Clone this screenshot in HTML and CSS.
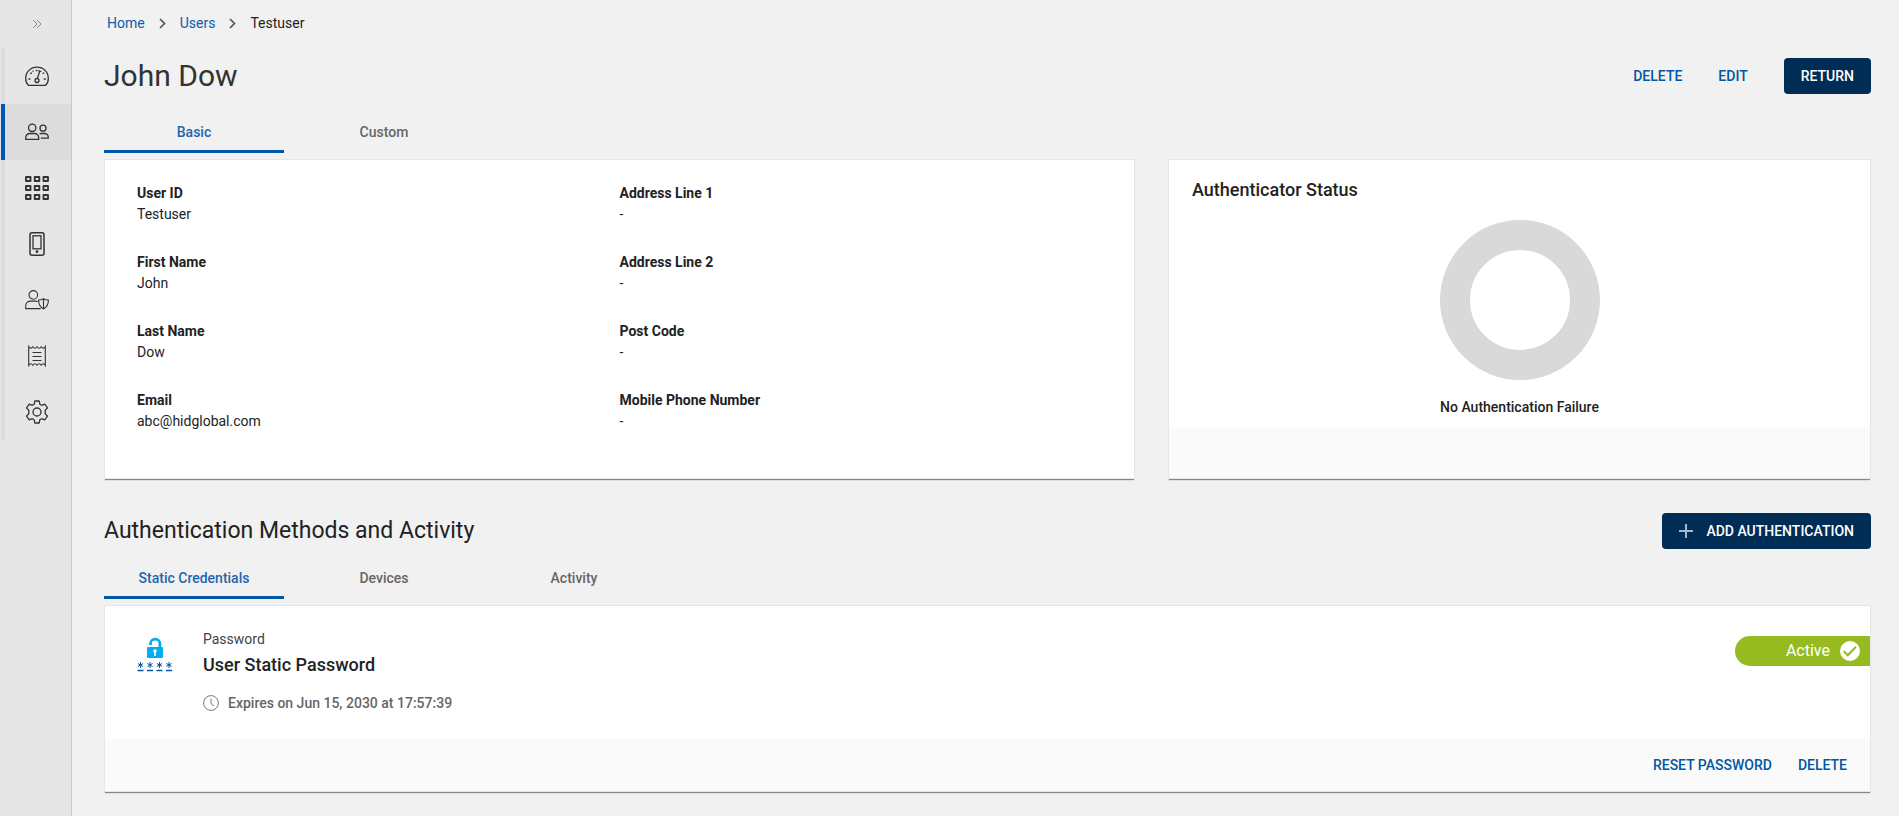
FILE: index.html
```html
<!DOCTYPE html>
<html lang="en">
<head>
    <meta charset="UTF-8">
    <meta name="viewport" content="width=device-width, initial-scale=1.0">
    <title>John Dow - Users</title>
    <link rel="stylesheet" href="styles.css">
</head>
<body>
    <div class="layout">
        <!-- Sidebar -->
        <nav class="sidebar" aria-label="Main menu">
            <button class="expand" aria-label="Expand menu">
                <svg width="10" height="10" viewBox="0 0 10 10"><path d="M1 1l4 4-4 4M5 1l4 4-4 4"/></svg>
            </button>
            <a class="nav-item" href="#" aria-label="Dashboard">
                <svg class="nav-icon" viewBox="0 0 24 24">
                    <path d="M3.4 21.3C1.700 19.800.7 17.500.7 14.500 .7 8 5.500 3.200 12 3.200S23.300 8 23.300 14.500c0 3-1 5.300-2.700 6.800z"/>
                    <circle cx="12" cy="16.500" r="2"/>
                    <path d="M12.400 14.400L14.800 7M13.300 6.600l3 .9"/>
                    <path class="dots" d="M3.400 15h2M18.800 15h2M5.300 9.200h1.600M10.800 6.500h1.600M17.600 9.200h1.600M7.500 7.300h1"/>
                </svg>
            </a>
            <a class="nav-item active" href="#" aria-label="Users">
                <svg class="nav-icon" viewBox="0 0 24 24">
                    <circle cx="7.200" cy="7.800" r="3.700"/>
                    <path d="M.7 19.300v-1.600c0-2.400 1.800-4.200 4.200-4.200h4.600c2.400 0 4.200 1.800 4.200 4.200v1.600z"/>
                    <circle cx="18" cy="8.200" r="3"/>
                    <path d="M14.600 13.800c.5-.2 1-.3 1.600-.3h3.300c2.100 0 3.800 1.600 3.800 3.700v1h-7.500"/>
                </svg>
            </a>
            <a class="nav-item" href="#" aria-label="Applications">
                <svg class="nav-icon grid-icon" viewBox="0 0 24 24">
                    <path d="M1 1h4.500v4H1zM9.700 1h4.600v4H9.700zM18.500 1H23v4h-4.500zM1 10h4.500v4H1zM9.700 10h4.600v4H9.700zM18.500 10H23v4h-4.500zM1 19h4.500v4H1zM9.700 19h4.600v4H9.700zM18.500 19H23v4h-4.500z"/>
                </svg>
            </a>
            <a class="nav-item" href="#" aria-label="Devices">
                <svg class="nav-icon" viewBox="0 0 24 24">
                    <rect class="thick" x="5" y=".8" width="14" height="22.400" rx="2"/>
                    <rect x="8" y="3.800" width="8" height="13"/>
                    <circle class="fill" cx="12" cy="19.600" r=".8"/>
                </svg>
            </a>
            <a class="nav-item" href="#" aria-label="Administrators">
                <svg class="nav-icon thin" viewBox="0 0 24 24">
                    <circle cx="8.300" cy="6.900" r="4.300"/>
                    <path d="M12.600 13.600c-.8-.4-1.400-.5-2.300-.5H5.700c-2.900 0-5 2-5 4.600v2.900h15"/>
                    <path d="M18.500 10.700c-1.500 1-3.100 1.300-4.900 1.300 0 4.300 1.600 7.200 4.900 8.900 3.300-1.700 4.900-4.600 4.900-8.900-1.800 0-3.400-.3-4.900-1.300zM18.500 10.700v10.200"/>
                </svg>
            </a>
            <a class="nav-item" href="#" aria-label="Reports">
                <svg class="nav-icon thin" viewBox="0 0 24 24">
                    <path d="M3.700 2.500q2 3.200 4.100.3 2.100 3 4.200 0 2.100 3 4.200 0 2.100 2.900 4.100-.3v19q-2-3.200-4.100-.3-2.100-3-4.200 0-2.100-3-4.200 0-2.100-2.900-4.100.3z"/>
                    <path d="M7.500 8.500h9M7.500 12.500h9M7.500 16.500h9"/>
                </svg>
            </a>
            <a class="nav-item" href="#" aria-label="Settings">
                <svg class="nav-icon" viewBox="0 0 24 24">
                    <circle cx="12" cy="12" r="4"/>
                    <path stroke-linejoin="round" d="M9.800 1h4.400l.6 3.200 1.900 1.100 3-1.100 2.800 3.700-2.300 2.400v3.400l2.300 2.400-2.800 3.700-3-1.100-1.900 1.100-.6 3.200H9.800l-.6-3.200-1.900-1.100-3 1.100-2.800-3.700 2.300-2.400v-3.400L1.500 7.900l2.800-3.700 3 1.100 1.900-1.100z"/>
                </svg>
            </a>
        </nav>

        <main class="content">
            <nav class="breadcrumb" aria-label="Breadcrumb">
                <a href="#">Home</a>
                <svg width="7" height="12" viewBox="0 0 7 12"><path d="M1 2l4.500 4.500L1 11"/></svg>
                <a href="#">Users</a>
                <svg width="7" height="12" viewBox="0 0 7 12"><path d="M1 2l4.500 4.500L1 11"/></svg>
                <span>Testuser</span>
            </nav>

            <header class="page-header">
                <h1>John Dow</h1>
                <div class="actions">
                    <button class="btn-text">Delete</button>
                    <button class="btn-text">Edit</button>
                    <button class="btn-primary">Return</button>
                </div>
            </header>

            <div class="tabs" role="tablist">
                <button class="tab selected" role="tab" aria-selected="true">Basic</button>
                <button class="tab" role="tab" aria-selected="false">Custom</button>
            </div>

            <div class="cards">
                <section class="card details">
                    <dl class="fields">
                        <div><dt>User ID</dt><dd>Testuser</dd></div>
                        <div><dt>First Name</dt><dd>John</dd></div>
                        <div><dt>Last Name</dt><dd>Dow</dd></div>
                        <div><dt>Email</dt><dd>abc@hidglobal.com</dd></div>
                    </dl>
                    <dl class="fields">
                        <div><dt>Address Line 1</dt><dd>-</dd></div>
                        <div><dt>Address Line 2</dt><dd>-</dd></div>
                        <div><dt>Post Code</dt><dd>-</dd></div>
                        <div><dt>Mobile Phone Number</dt><dd>-</dd></div>
                    </dl>
                </section>

                <section class="card status">
                    <div class="status-body">
                        <h3>Authenticator Status</h3>
                        <div class="donut"></div>
                        <p>No Authentication Failure</p>
                    </div>
                    <div class="card-footer"></div>
                </section>
            </div>

            <!-- Authentication methods -->
            <header class="section-header">
                <h2>Authentication Methods and Activity</h2>
                <button class="btn-primary">
                    <svg width="14" height="14" viewBox="0 0 14 14"><path d="M7 0v14M0 7h14"/></svg>
                    Add Authentication
                </button>
            </header>

            <div class="tabs" role="tablist">
                <button class="tab selected" role="tab" aria-selected="true">Static Credentials</button>
                <button class="tab" role="tab" aria-selected="false">Devices</button>
                <button class="tab" role="tab" aria-selected="false">Activity</button>
            </div>

            <section class="card">
                <div class="credential">
                    <svg class="lock" width="36" height="36" viewBox="0 0 36 36">
                        <path d="M13.500 8V6.800a4.700 4.700 0 0 1 9.400 0V11" fill="none" stroke="#00aeef" stroke-width="2.800"/>
                        <rect x="10" y="10" width="16" height="11" rx="1" fill="#00aeef"/>
                        <circle cx="18" cy="14" r="1.800" fill="#fff"/>
                        <path d="M18 14v5" stroke="#fff" stroke-width="1.600"/>
                        <g fill="none" stroke="#0057a4" stroke-width="1">
                            <path d="M3.500 25v6M.9 26.500l5.200 3M6.100 26.500l-5.200 3"/>
                            <path d="M13 25v6M10.400 26.500l5.200 3M15.600 26.500l-5.200 3"/>
                            <path d="M22.500 25v6M19.900 26.500l5.200 3M25.100 26.500l-5.200 3"/>
                            <path d="M32 25v6M29.400 26.500l5.200 3M34.600 26.500l-5.200 3"/>
                            <path d="M.5 33.500h6M10 33.500h6M19.500 33.500h6M29 33.500h6" stroke-width="1.500"/>
                        </g>
                    </svg>
                    <div class="credential-info">
                        <p class="type">Password</p>
                        <h3>User Static Password</h3>
                        <p class="expires">
                            <svg width="16" height="16" viewBox="0 0 16 16"><circle cx="8" cy="8" r="7.400"/><path d="M8 3.500V8.500l3 2.500"/></svg>
                            Expires on Jun 15, 2030 at 17:57:39
                        </p>
                    </div>
                    <div class="badge">
                        Active
                        <svg width="20" height="20" viewBox="0 0 20 20"><circle cx="10" cy="10" r="10" fill="#fff"/><path d="M3.800 10.300l4 4L16 5.800" fill="none" stroke="#95bb20" stroke-width="2"/></svg>
                    </div>
                </div>
                <div class="card-footer">
                    <button class="btn-text">Reset Password</button>
                    <button class="btn-text">Delete</button>
                </div>
            </section>
        </main>
    </div>
</body>
</html>
```
FILE: styles.css
```css
* {
    box-sizing: border-box;
}
body {
    margin: 0;
    background-color: #f1f1f1;
    color: #222;
    font-family: Roboto, Arial, sans-serif;
    font-size: 14px;
    line-height: 20px;
}
h1, h2, h3, p, dl, dd {
    margin: 0;
}
a {
    color: #0b5cad;
    text-decoration: none;
}
button {
    padding: 0;
    border: none;
    background: none;
    font-family: inherit;
    font-size: 14px;
    font-weight: 500;
    cursor: pointer;
}
.layout {
    display: flex;
    min-height: 100vh;
}

/* Sidebar */
.sidebar {
    flex: none;
    width: 72px;
    padding-left: 1px;
    background-color: #e6e6e6;
    border-right: 1px solid #c8c8c8;
}
.expand {
    display: flex;
    align-items: center;
    width: 100%;
    height: 48px;
    padding-left: 31px;
}
.expand svg {
    fill: none;
    stroke: #8c8c8c;
}
.nav-item {
    display: flex;
    align-items: center;
    height: 56px;
    padding-left: 20px;
    border-left: 4px solid #dcdcdc;
}
.nav-item.active {
    background-color: #dcdcdc;
    border-left-color: #0057b8;
}
.nav-icon {
    width: 24px;
    height: 24px;
    fill: none;
    stroke: #333;
    stroke-width: 1.3;
}
.nav-icon.thin {
    stroke-width: 1.1;
}
.nav-icon.grid-icon {
    stroke-width: 1.9;
    stroke-linejoin: round;
}
.nav-icon .thick, .nav-icon .dots {
    stroke-width: 1.5;
}
.nav-icon .fill {
    fill: #333;
}

/* Page */
.content {
    flex: 1;
    padding: 13px 28px 22px 32px;
}
.breadcrumb {
    display: flex;
    align-items: center;
    gap: 14px;
    padding-left: 3px;
}
.breadcrumb svg {
    fill: none;
    stroke: #555;
    stroke-width: 1.7;
}
.page-header, .section-header {
    display: flex;
    align-items: center;
    justify-content: space-between;
}
.page-header {
    margin-top: 25px;
}
.section-header {
    margin-top: 34px;
}
h1 {
    color: #333;
    font-size: 30px;
    font-weight: 400;
    line-height: 36px;
}
h2 {
    font-size: 23px;
    font-weight: 400;
    line-height: 36px;
}
h3 {
    font-size: 18px;
    font-weight: 500;
    line-height: 24px;
}
.actions {
    display: flex;
    gap: 20px;
}
.btn-text {
    padding: 0 8px;
    color: #0057a4;
    text-transform: uppercase;
}
.btn-primary {
    display: flex;
    align-items: center;
    gap: 13px;
    height: 36px;
    padding: 0 17px;
    border-radius: 4px;
    background-color: #002d56;
    color: #fff;
    text-transform: uppercase;
}
.btn-primary svg {
    fill: none;
    stroke: #a9b8c8;
    stroke-width: 2;
}
.actions .btn-primary {
    margin-left: 8px;
}

.tabs {
    display: flex;
    gap: 10px;
    height: 44px;
    margin: 15px 0 6px;
}
.section-header + .tabs {
    margin-top: 6px;
}
.tab {
    width: 180px;
    padding-top: 4px;
    border-bottom: 3px solid transparent;
    color: #666;
}
.tab.selected {
    border-bottom-color: #0057a4;
    color: #1f66ad;
}

/* Cards */
.cards {
    display: grid;
    grid-template-columns: 1031fr 703fr;
    gap: 33px;
}
.card {
    border: 1px solid #e6e6e6;
    background-color: #fff;
    box-shadow: 0 2px 1px -1px #888;
}
.details {
    display: flex;
    padding: 23px 32px 46px;
}
.fields {
    display: flex;
    flex-direction: column;
    flex: 1;
    gap: 27px;
}
.fields dt {
    font-weight: 700;
    line-height: 21px;
}
.fields dd {
    line-height: 21px;
}
.status {
    display: flex;
    flex-direction: column;
}
.status-body {
    display: flex;
    flex: 1;
    flex-direction: column;
    align-items: center;
    padding: 18px 23px 0;
}
.status-body h3 {
    align-self: flex-start;
}
.status-body p {
    margin-top: 17px;
    font-weight: 500;
}
.donut {
    width: 160px;
    height: 160px;
    margin-top: 18px;
    border: 30px solid #d9d9d9;
    border-radius: 50%;
}
.card-footer {
    display: flex;
    align-items: center;
    justify-content: flex-end;
    gap: 10px;
    height: 52px;
    padding-right: 15px;
    background-color: #fafafa;
}
.status .card-footer {
    height: 50px;
}

/* Credential row */
.credential {
    display: flex;
    align-items: flex-start;
    padding: 30px 0 26px 32px;
}
.lock {
    margin: 1px 30px 0 0;
}
.credential-info {
    flex: 1;
}
.type {
    line-height: 6px;
    color: #444;
}
.credential-info h3 {
    margin-top: 11px;
}
.expires {
    display: flex;
    align-items: center;
    gap: 9px;
    margin-top: 16px;
    color: #666;
    font-weight: 500;
}
.expires svg {
    fill: none;
    stroke: #777;
}
.badge {
    display: flex;
    align-items: center;
    justify-content: flex-end;
    gap: 10px;
    width: 135px;
    height: 30px;
    padding-right: 10px;
    border-radius: 15px 0 0 15px;
    background-color: #95bb20;
    color: #fff;
    font-size: 16px;
}
```
